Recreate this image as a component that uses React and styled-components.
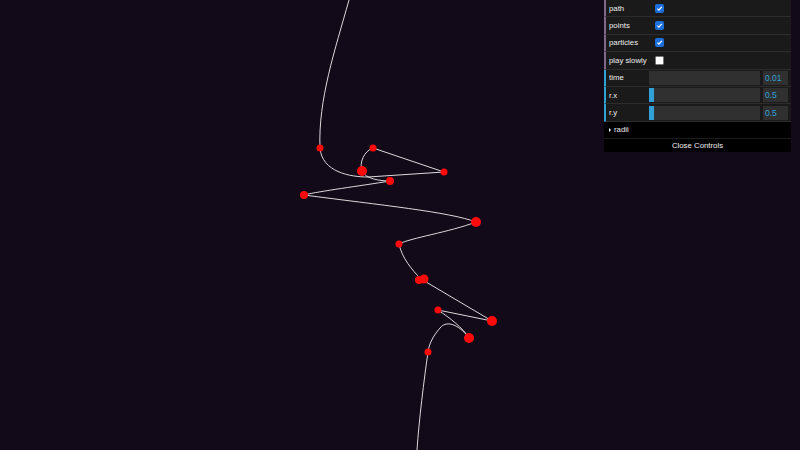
import React from 'react';
import styled, { createGlobalStyle } from 'styled-components';

const GlobalStyle = createGlobalStyle`
  html, body {
    margin: 0;
    padding: 0;
    background: #120a18;
    overflow: hidden;
  }
`;

const Stage = styled.div`
  position: relative;
  width: 800px;
  height: 450px;
  background: #120a18;
  overflow: hidden;
`;

const Canvas = styled.svg`
  display: block;
  width: 800px;
  height: 450px;
`;

const Gui = styled.div`
  position: absolute;
  top: 0;
  right: 9px;
  width: 187px;
  font-family: "Liberation Sans", Arial, sans-serif;
  font-size: 7.8px;
  color: #eee;
`;

const Row = styled.div`
  display: grid;
  grid-template-columns: 40px 1fr;
  align-items: center;
  height: 17.4px;
  box-sizing: border-box;
  padding: 0 3px 0 3px;
  background: #1a1a1a;
  border-left: 2px solid ${({ $accent }) => $accent};
  border-bottom: 1px solid #2c2c2c;
`;

const Label = styled.span`
  white-space: nowrap;
  overflow: hidden;
`;

const Check = styled.span`
  display: flex;
  align-items: center;
  justify-content: center;
  width: 9px;
  height: 9px;
  margin-left: 6px;
  box-sizing: border-box;
  border-radius: 1.5px;
  background: ${({ $on }) => ($on ? '#1c6fd9' : '#fff')};
  border: 1px solid ${({ $on }) => ($on ? '#1c6fd9' : '#767676')};
`;

const Controls = styled.div`
  display: grid;
  grid-template-columns: 1fr 25px;
  gap: 3px;
  align-items: center;
`;

const Track = styled.div`
  height: 14px;
  background: #303030;
  display: flex;
`;

const Fill = styled.div`
  height: 100%;
  background: #2fa1d6;
`;

const Value = styled.div`
  height: 14px;
  line-height: 14px;
  background: #303030;
  color: #2fa1d6;
  font-size: 8.5px;
  padding-left: 2px;
  box-sizing: border-box;
`;

const Folder = styled.div`
  display: flex;
  align-items: center;
  gap: 3px;
  height: 16px;
  padding-left: 5px;
  background: #000;
  border-bottom: 1px solid #1c1c1c;
`;

const Arrow = styled.span`
  width: 0;
  height: 0;
  border-top: 2px solid transparent;
  border-bottom: 2px solid transparent;
  border-left: 2.5px solid #fff;
`;

const Close = styled.div`
  height: 13px;
  line-height: 13px;
  text-align: center;
  background: #000;
`;

const curve = [
  'M 349 0',
  'C 335 50, 318 100, 320 148',
  'C 322 172, 350 177, 368 177',
  'L 444 172',
  'L 373 148',
  'C 364 151, 359 163, 362 171',
  'C 366 179, 380 181, 390 181',
  'C 360 186, 320 191, 304 195',
  'C 380 205, 450 212, 476 222',
  'C 450 232, 410 238, 399 244',
  'C 402 258, 412 270, 421 279',
  'L 492 321',
  'L 438 310',
  'C 450 318, 463 328, 469 338',
  'C 462 328, 448 318, 440 328',
  'C 433 336, 429 344, 428 352',
  'C 424 380, 419 420, 417 450',
].join(' ');

const dots = [
  [320, 148, 3.5], [373, 148, 3.5], [362, 171, 5], [444, 172, 3.5],
  [390, 181, 4], [304, 195, 4], [476, 222, 5], [399, 244, 3.5],
  [419, 280, 4], [424, 279, 4.5], [438, 310, 3.5], [492, 321, 5],
  [469, 338, 5], [428, 352, 3.5],
];

const toggles = [
  { name: 'path', on: true },
  { name: 'points', on: true },
  { name: 'particles', on: true },
  { name: 'play slowly', on: false },
];

const numbers = [
  { name: 'time', value: '0.01', fill: 0 },
  { name: 'r.x', value: '0.5', fill: 5 },
  { name: 'r.y', value: '0.5', fill: 5 },
];

const Tick = () => (
  <svg width="7" height="7" viewBox="0 0 10 10">
    <path d="M2 5.2 L4.2 7.4 L8.2 2.6" fill="none" stroke="#fff" strokeWidth="1.8" />
  </svg>
);

export default function App() {
  return (
    <Stage>
      <GlobalStyle />
      <Canvas viewBox="0 0 800 450">
        <path d={curve} fill="none" stroke="#dcd8de" strokeWidth="1" />
        {dots.map(([x, y, r], i) => (
          <circle key={i} cx={x} cy={y} r={r} fill="#ff0a0a" />
        ))}
      </Canvas>
      <Gui>
        {toggles.map(t => (
          <Row key={t.name} $accent="#806787">
            <Label>{t.name}</Label>
            <Check $on={t.on}>{t.on && <Tick />}</Check>
          </Row>
        ))}
        {numbers.map(n => (
          <Row key={n.name} $accent="#2fa1d6">
            <Label>{n.name}</Label>
            <Controls>
              <Track>
                <Fill style={{ width: n.fill }} />
              </Track>
              <Value>{n.value}</Value>
            </Controls>
          </Row>
        ))}
        <Folder>
          <Arrow />
          <span>radii</span>
        </Folder>
        <Close>Close Controls</Close>
      </Gui>
    </Stage>
  );
}
